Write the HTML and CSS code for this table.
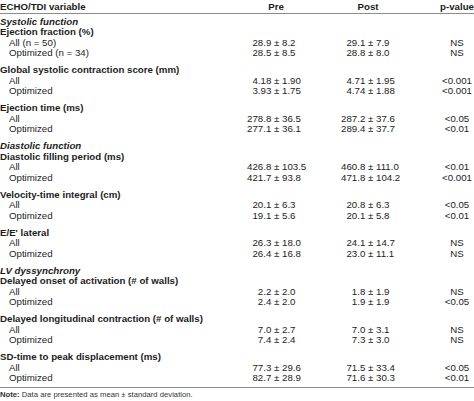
FILE: index.html
```html
<!DOCTYPE html>
<html>
<head>
<meta charset="utf-8">
<link rel="stylesheet" href="styles.css">
</head>
<body>
<div class="table">
  <div class="row head">
    <span class="lab">ECHO/TDI variable</span>
    <span class="hpre">Pre</span>
    <span class="hpost">Post</span>
    <span class="pv">p-value</span>
  </div>
  <div class="tbody">
    <div class="group">
      <div class="row section"><span class="lab">Systolic function</span></div>
      <div class="row title"><span class="lab">Ejection fraction (%)</span></div>
      <div class="row sub"><span class="lab">All (n = 50)</span><span class="na">28.9</span><span class="nb">± 8.2</span><span class="na">29.1</span><span class="nb">± 7.9</span><span class="pv">NS</span></div>
      <div class="row sub"><span class="lab">Optimized (n = 34)</span><span class="na">28.5</span><span class="nb">± 8.5</span><span class="na">28.8</span><span class="nb">± 8.0</span><span class="pv">NS</span></div>
    </div>
    <div class="group">
      <div class="row title"><span class="lab">Global systolic contraction score (mm)</span></div>
      <div class="row sub"><span class="lab">All</span><span class="na">4.18</span><span class="nb">± 1.90</span><span class="na">4.71</span><span class="nb">± 1.95</span><span class="pv">&lt;0.001</span></div>
      <div class="row sub"><span class="lab">Optimized</span><span class="na">3.93</span><span class="nb">± 1.75</span><span class="na">4.74</span><span class="nb">± 1.88</span><span class="pv">&lt;0.001</span></div>
    </div>
    <div class="group">
      <div class="row title"><span class="lab">Ejection time (ms)</span></div>
      <div class="row sub"><span class="lab">All</span><span class="na">278.8</span><span class="nb">± 36.5</span><span class="na">287.2</span><span class="nb">± 37.6</span><span class="pv">&lt;0.05</span></div>
      <div class="row sub"><span class="lab">Optimized</span><span class="na">277.1</span><span class="nb">± 36.1</span><span class="na">289.4</span><span class="nb">± 37.7</span><span class="pv">&lt;0.01</span></div>
    </div>
    <div class="group">
      <div class="row section"><span class="lab">Diastolic function</span></div>
      <div class="row title"><span class="lab">Diastolic filling period (ms)</span></div>
      <div class="row sub"><span class="lab">All</span><span class="na">426.8</span><span class="nb">± 103.5</span><span class="na">460.8</span><span class="nb">± 111.0</span><span class="pv">&lt;0.01</span></div>
      <div class="row sub"><span class="lab">Optimized</span><span class="na">421.7</span><span class="nb">± 93.8</span><span class="na">471.8</span><span class="nb">± 104.2</span><span class="pv">&lt;0.001</span></div>
    </div>
    <div class="group">
      <div class="row title"><span class="lab">Velocity-time integral (cm)</span></div>
      <div class="row sub"><span class="lab">All</span><span class="na">20.1</span><span class="nb">± 6.3</span><span class="na">20.8</span><span class="nb">± 6.3</span><span class="pv">&lt;0.05</span></div>
      <div class="row sub"><span class="lab">Optimized</span><span class="na">19.1</span><span class="nb">± 5.6</span><span class="na">20.1</span><span class="nb">± 5.8</span><span class="pv">&lt;0.01</span></div>
    </div>
    <div class="group">
      <div class="row title"><span class="lab">E/E' lateral</span></div>
      <div class="row sub"><span class="lab">All</span><span class="na">26.3</span><span class="nb">± 18.0</span><span class="na">24.1</span><span class="nb">± 14.7</span><span class="pv">NS</span></div>
      <div class="row sub"><span class="lab">Optimized</span><span class="na">26.4</span><span class="nb">± 16.8</span><span class="na">23.0</span><span class="nb">± 11.1</span><span class="pv">NS</span></div>
    </div>
    <div class="group">
      <div class="row section"><span class="lab">LV dyssynchrony</span></div>
      <div class="row title"><span class="lab">Delayed onset of activation (# of walls)</span></div>
      <div class="row sub"><span class="lab">All</span><span class="na">2.2</span><span class="nb">± 2.0</span><span class="na">1.8</span><span class="nb">± 1.9</span><span class="pv">NS</span></div>
      <div class="row sub"><span class="lab">Optimized</span><span class="na">2.4</span><span class="nb">± 2.0</span><span class="na">1.9</span><span class="nb">± 1.9</span><span class="pv">&lt;0.05</span></div>
    </div>
    <div class="group">
      <div class="row title"><span class="lab">Delayed longitudinal contraction (# of walls)</span></div>
      <div class="row sub"><span class="lab">All</span><span class="na">7.0</span><span class="nb">± 2.7</span><span class="na">7.0</span><span class="nb">± 3.1</span><span class="pv">NS</span></div>
      <div class="row sub"><span class="lab">Optimized</span><span class="na">7.4</span><span class="nb">± 2.4</span><span class="na">7.3</span><span class="nb">± 3.0</span><span class="pv">NS</span></div>
    </div>
    <div class="group">
      <div class="row title"><span class="lab">SD-time to peak displacement (ms)</span></div>
      <div class="row sub"><span class="lab">All</span><span class="na">77.3</span><span class="nb">± 29.6</span><span class="na">71.5</span><span class="nb">± 33.4</span><span class="pv">&lt;0.05</span></div>
      <div class="row sub"><span class="lab">Optimized</span><span class="na">82.7</span><span class="nb">± 28.9</span><span class="na">71.6</span><span class="nb">± 30.3</span><span class="pv">&lt;0.01</span></div>
    </div>
  </div>
  <div class="note"><b>Note:</b> Data are presented as mean ± standard deviation.</div>
</div>
</body>
</html>
```
FILE: styles.css
```css
html, body {
  margin: 0;
  padding: 0;
  background: #fff;
}
body {
  width: 474px;
  height: 401px;
  overflow: hidden;
  font-family: "Liberation Sans", Arial, sans-serif;
  font-size: 9.7px;
  line-height: 10.6px;
  color: #1c1c1c;
}
.row {
  display: grid;
  grid-template-columns: 230px 44px 48px 46px 72px 34px;
  height: 10.6px;
  white-space: nowrap;
}
.head {
  padding-top: 2.2px;
  font-weight: bold;
  border-bottom: 1px solid #8c8c8c;
}
.hpre {
  grid-column: 2 / 4;
  text-align: center;
}
.hpost {
  grid-column: 4 / 6;
  text-align: center;
  padding-right: 26px;
}
.tbody {
  padding-top: 2.9px;
  padding-bottom: 3.5px;
  border-bottom: 1px solid #8c8c8c;
}
.group + .group {
  margin-top: 6.2px;
}
.title .lab {
  font-weight: bold;
}
.section .lab {
  font-weight: bold;
  font-style: italic;
}
.lab {
  grid-column: 1;
}
.sub .lab {
  padding-left: 9px;
}
.na {
  text-align: right;
  padding-right: 0.28em;
}
.nb {
  text-align: left;
}
.pv {
  grid-column: 6;
  text-align: center;
}
.note {
  font-size: 7.7px;
  line-height: 9px;
  padding-top: 1.5px;
  color: #333;
}
```
